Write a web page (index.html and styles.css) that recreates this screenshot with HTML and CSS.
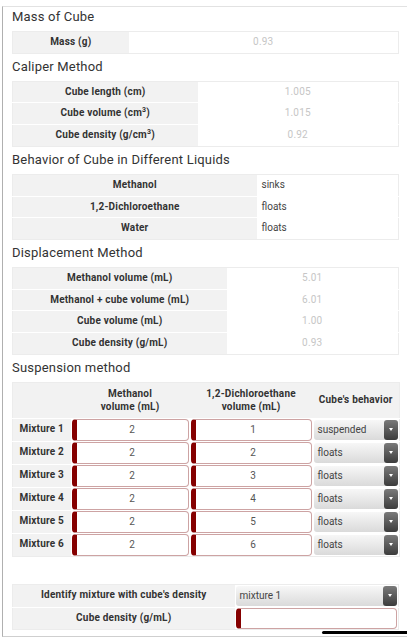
FILE: index.html
```html
<!DOCTYPE html>
<html>
<head>
<meta charset="utf-8">
<link rel="stylesheet" href="styles.css">
</head>
<body>
<div class="frame">
  <h2 class="first">Mass of Cube</h2>
  <table class="data">
    <colgroup><col class="c-mass"><col></colgroup>
    <tr><td class="lbl">Mass (g)</td><td class="val">0.93</td></tr>
  </table>

  <h2>Caliper Method</h2>
  <table class="data">
    <colgroup><col class="c-cal"><col></colgroup>
    <tr><td class="lbl">Cube length (cm)</td><td class="val">1.005</td></tr>
    <tr><td class="lbl">Cube volume (cm<sup>3</sup>)</td><td class="val">1.015</td></tr>
    <tr><td class="lbl">Cube density (g/cm<sup>3</sup>)</td><td class="val">0.92</td></tr>
  </table>

  <h2>Behavior of Cube in Different Liquids</h2>
  <table class="data">
    <colgroup><col class="c-beh"><col></colgroup>
    <tr><td class="lbl">Methanol</td><td class="txt">sinks</td></tr>
    <tr><td class="lbl">1,2-Dichloroethane</td><td class="txt">floats</td></tr>
    <tr><td class="lbl">Water</td><td class="txt">floats</td></tr>
  </table>

  <h2>Displacement Method</h2>
  <table class="data">
    <colgroup><col class="c-dis"><col></colgroup>
    <tr><td class="lbl">Methanol volume (mL)</td><td class="val">5.01</td></tr>
    <tr><td class="lbl">Methanol + cube volume (mL)</td><td class="val">6.01</td></tr>
    <tr><td class="lbl">Cube volume (mL)</td><td class="val">1.00</td></tr>
    <tr><td class="lbl">Cube density (g/mL)</td><td class="val">0.93</td></tr>
  </table>

  <h2>Suspension method</h2>
  <table class="data susp">
    <colgroup><col class="s1"><col class="s2"><col class="s3"><col class="s4"></colgroup>
    <tr class="head"><td class="lbl"></td><td class="lbl">Methanol<br>volume (mL)</td><td class="lbl">1,2-Dichloroethane<br>volume (mL)</td><td class="lbl">Cube's behavior</td></tr>
    <tr><td class="lbl">Mixture 1</td><td class="cell"><div class="inp">2</div></td><td class="cell"><div class="inp">1</div></td><td class="cell"><div class="sel"><span>suspended</span><i class="arrow"></i></div></td></tr>
    <tr><td class="lbl">Mixture 2</td><td class="cell"><div class="inp">2</div></td><td class="cell"><div class="inp">2</div></td><td class="cell"><div class="sel"><span>floats</span><i class="arrow"></i></div></td></tr>
    <tr><td class="lbl">Mixture 3</td><td class="cell"><div class="inp">2</div></td><td class="cell"><div class="inp">3</div></td><td class="cell"><div class="sel"><span>floats</span><i class="arrow"></i></div></td></tr>
    <tr><td class="lbl">Mixture 4</td><td class="cell"><div class="inp">2</div></td><td class="cell"><div class="inp">4</div></td><td class="cell"><div class="sel"><span>floats</span><i class="arrow"></i></div></td></tr>
    <tr><td class="lbl">Mixture 5</td><td class="cell"><div class="inp">2</div></td><td class="cell"><div class="inp">5</div></td><td class="cell"><div class="sel"><span>floats</span><i class="arrow"></i></div></td></tr>
    <tr><td class="lbl">Mixture 6</td><td class="cell"><div class="inp">2</div></td><td class="cell"><div class="inp">6</div></td><td class="cell"><div class="sel"><span>floats</span><i class="arrow"></i></div></td></tr>
  </table>

  <table class="data final">
    <colgroup><col class="c-fin"><col></colgroup>
    <tr><td class="lbl">Identify mixture with cube's density</td><td class="cell"><div class="sel"><span>mixture 1</span><i class="arrow"></i></div></td></tr>
    <tr><td class="lbl">Cube density (g/mL)</td><td class="cell"><div class="inp"></div></td></tr>
  </table>
</div>
<div class="home-bar"></div>
</body>
</html>
```
FILE: styles.css
```css
html, body {
  margin: 0;
  padding: 0;
  background: #fff;
}
body {
  font-family: Roboto, "Liberation Sans", sans-serif;
  color: #333;
  width: 407px;
  height: 640px;
  overflow: hidden;
  position: relative;
}
.frame {
  margin: 6px 0 0 2px;
  border-top: 1px solid #e2e2e2;
  border-left: 1px solid #b0b0b0;
  border-bottom: 1px solid #cfcfcf;
  padding: 0 8px 0 9px;
  height: 629px;
  box-sizing: content-box;
}
h2 {
  font-size: 13px;
  font-weight: 400;
  letter-spacing: 0.2px;
  line-height: 20px;
  margin: 3px 0 4px;
  color: #333;
}
h2.first {
  margin-top: 0;
}
.data {
  width: 100%;
  border-collapse: collapse;
  table-layout: fixed;
  border: 1px solid #ececec;
  font-size: 10px;
}
.data td {
  padding: 0 4px;
  line-height: 20.7px;
  vertical-align: middle;
}
.data tr + tr td {
  border-top: 1px solid #fff;
}
.lbl {
  background: #f2f2f2;
  font-weight: 700;
  letter-spacing: 0.2px;
  text-align: center;
  color: #333;
}
.val {
  background: #fff;
  color: #c6c6c6;
  letter-spacing: 0.2px;
  text-align: center;
}
.txt {
  background: #fff;
  color: #444;
  text-align: left;
}
.data td.txt {
  padding-left: 5px;
}
sup {
  font-size: 7px;
  line-height: 0;
  vertical-align: baseline;
  position: relative;
  top: -4px;
}
.c-mass { width: 116px; }
.c-cal { width: 185px; }
.c-beh { width: 244px; }
.c-dis { width: 214px; }
.c-fin { width: 222px; }
.s1 { width: 58px; }
.s2 { width: 119px; }
.s3 { width: 123px; }
.s4 { width: 87px; }
.data.susp tr.head td {
  line-height: 13px;
  padding-top: 4px;
  padding-bottom: 5px;
}
.data td.cell {
  padding: 0 1px;
  background: #fff;
  line-height: 0;
}
.inp {
  height: 22px;
  box-sizing: border-box;
  border: 1px solid #cda3a3;
  border-left: 5px solid #850000;
  border-radius: 4px;
  background: #fff;
  text-align: center;
  line-height: 20px;
  color: #555;
  font-size: 10px;
}
.sel {
  height: 20px;
  margin: 1px 0;
  display: flex;
  align-items: center;
  border-radius: 3px;
  background: linear-gradient(#f7f7f7, #dadada);
  padding-left: 4px;
  color: #444;
  font-size: 10px;
  line-height: 20px;
}
.sel span {
  flex: 1;
}
.arrow {
  width: 14px;
  height: 20px;
  border-radius: 3px;
  background: linear-gradient(#7a7a7a, #3c3c3c);
  display: flex;
  align-items: center;
  justify-content: center;
}
.arrow::after {
  content: "";
  border-left: 2.5px solid transparent;
  border-right: 2.5px solid transparent;
  border-top: 3px solid #fff;
}
.final {
  margin-top: 27px;
}
.final .inp {
  height: 21px;
  line-height: 19px;
}
.home-bar {
  position: absolute;
  left: 322px;
  top: 631px;
  width: 90px;
  height: 3px;
  border-radius: 2px;
  background: #000;
}
```
